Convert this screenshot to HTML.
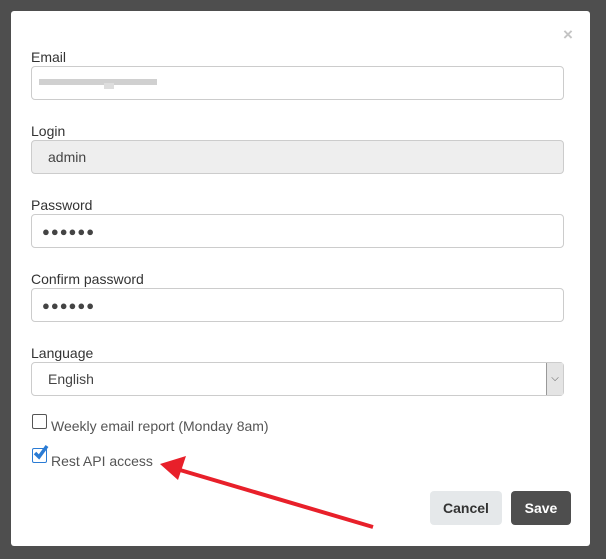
<!DOCTYPE html>
<html><head><style>
body{margin:0;width:606px;height:559px;background:#4e4e4e;font-family:"Liberation Sans",Arial,sans-serif;position:relative;overflow:hidden}
.m{position:absolute;left:11px;top:11px;width:579px;height:535px;background:#fff;border-radius:3px}
.l{position:absolute;left:31px;font-size:14px;color:#333}
.i{position:absolute;left:31px;width:531px;height:32px;border:1px solid #ccc;border-radius:4px;box-sizing:content-box;font-size:14px;color:#444;line-height:32px;padding-left:0}
.i span{margin-left:16px}
.cb{position:absolute;left:32px;width:13px;height:13px;border:1px solid #555;border-radius:2px}
.t{position:absolute;left:51px;font-size:14px;color:#555}
.b{position:absolute;top:491px;height:34px;border-radius:4px;font-size:14px;font-weight:bold;line-height:34px;text-align:center}
</style></head><body>
<div class="m"></div>
<div style="position:absolute;left:563px;top:25px;color:#c4c4c4;font-size:17px;font-weight:bold">×</div>
<div class="l" style="top:49px">Email</div>
<div class="i" style="top:66px"><svg width="120" height="14" style="position:absolute;left:7px;top:9px"><rect x="0" y="3" width="118" height="6" fill="#d0d0d0"/><rect x="65" y="7" width="10" height="6" fill="#ddd"/></svg></div>
<div class="l" style="top:123px">Login</div>
<div class="i" style="top:140px;background:#eee"><span>admin</span></div>
<div class="l" style="top:197px">Password</div>
<div class="i" style="top:214px"><span style="margin-left:10px;font-size:13px;letter-spacing:1px">●●●●●●</span></div>
<div class="l" style="top:271px">Confirm password</div>
<div class="i" style="top:288px"><span style="margin-left:10px;font-size:13px;letter-spacing:1px">●●●●●●</span></div>
<div class="l" style="top:345px">Language</div>
<div class="i" style="top:362px"><span>English</span><div style="position:absolute;right:0;top:0;width:16px;height:32px;background:#e4e4e4;border-left:1px solid #999;color:#555;font-size:10px;text-align:center">⌵</div></div>
<div class="cb" style="top:414px"></div>
<div class="t" style="top:418px">Weekly email report (Monday 8am)</div>
<div class="cb" style="top:448px;border-color:#2a7bd4"></div>
<svg style="position:absolute;left:32px;top:444px" width="18" height="18"><path d="M3 9 L7 13 L15 2" stroke="#2a7bd4" stroke-width="3.5" fill="none"/></svg>
<div class="t" style="top:453px">Rest API access</div>
<svg style="position:absolute;left:0;top:0" width="606" height="559"><line x1="373" y1="527" x2="180" y2="470" stroke="#e8202a" stroke-width="4"/><polygon points="160,464 186,456 178,480" fill="#e8202a"/></svg>
<div class="b" style="left:430px;width:72px;background:#e5e8ea;color:#333">Cancel</div>
<div class="b" style="left:511px;width:60px;background:#4e4e4e;color:#fff">Save</div>
</body></html>
